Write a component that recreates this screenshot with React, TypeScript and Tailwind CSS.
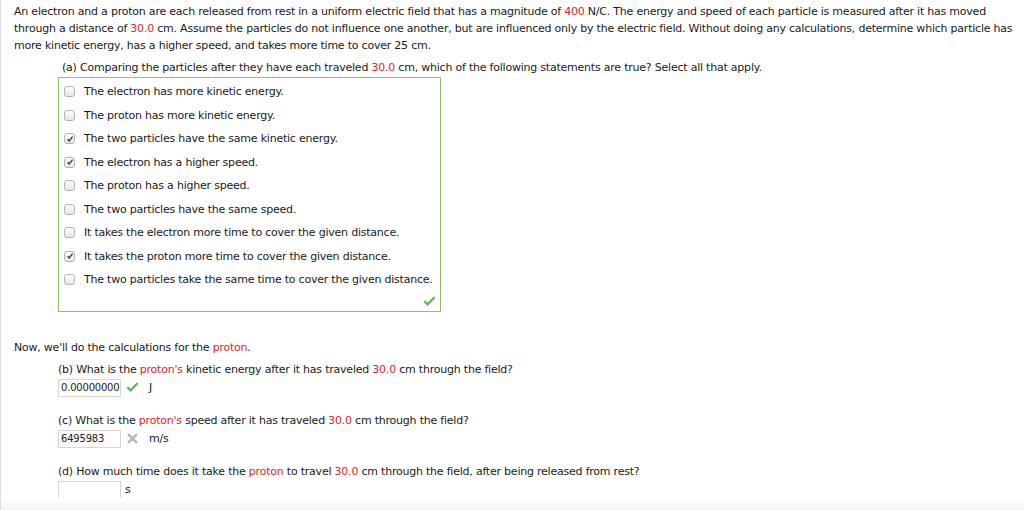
import React from 'react';

const Red = ({ children }: { children: React.ReactNode }) => (
  <span className="text-[#e8212a]">{children}</span>
);

const Box = ({ checked }: { checked: boolean }) => (
  <span className="mr-[9px] flex h-[11px] w-[11px] shrink-0 items-center justify-center rounded-[3px] border border-[#b4b4b4] bg-gradient-to-b from-[#fdfdfd] to-[#e6e6e6]">
    {checked && (
      <svg width="8" height="8" viewBox="0 0 8 8">
        <path d="M1.5 4.2 L3.2 6 L6.6 1.6" fill="none" stroke="#3a3a3a" strokeWidth="1.4" />
      </svg>
    )}
  </span>
);

const Check = ({ className = '' }: { className?: string }) => (
  <svg className={className} width="13" height="11" viewBox="0 0 14 11">
    <path d="M1 6 L5 10 L13 1.5 L11.6 0.5 L5 7.3 L2.4 4.6 Z" fill="#5cb85c" stroke="#4a9d4a" strokeWidth="0.6" strokeLinejoin="round" />
  </svg>
);

const Cross = () => (
  <svg width="11" height="11" viewBox="0 0 12 12">
    <path d="M2 2 L10 10 M10 2 L2 10" stroke="#b5b5b5" strokeWidth="2.8" strokeLinecap="round" />
  </svg>
);

const options: [string, boolean][] = [
  ['The electron has more kinetic energy.', false],
  ['The proton has more kinetic energy.', false],
  ['The two particles have the same kinetic energy.', true],
  ['The electron has a higher speed.', true],
  ['The proton has a higher speed.', false],
  ['The two particles have the same speed.', false],
  ['It takes the electron more time to cover the given distance.', false],
  ['It takes the proton more time to cover the given distance.', true],
  ['The two particles take the same time to cover the given distance.', false],
];

const Input = ({ value }: { value: string }) => (
  <div className="flex h-[18px] w-[63px] items-center border border-[#d6d6d6] bg-white px-[2px] text-[10px] leading-none tracking-[-0.2px] text-[#222]">
    {value}
  </div>
);

export default function App() {
  return (
    <div
      className="relative h-[510px] w-[1024px] overflow-hidden border-l border-[#dcdcdc] bg-white text-[11px] leading-[17px] tracking-[-0.22px] text-[#1a1a1a]"
      style={{ fontFamily: '"DejaVu Sans", Verdana, sans-serif' }}
    >
      <div className="pl-[13px] pr-[20px] pt-[3px]">
        <p className="w-[1011px]">
          An electron and a proton are each released from rest in a uniform electric field that has a magnitude of <Red>400</Red> N/C. The energy and speed of each particle is measured after it has moved through a distance of <Red>30.0</Red> cm. Assume the particles do not influence one another, but are influenced only by the electric field. Without doing any calculations, determine which particle has more kinetic energy, has a higher speed, and takes more time to cover 25 cm.
        </p>
        <div className="pl-[44px] pt-[5px]">
          <p className="pl-[4px]">
            (a) Comparing the particles after they have each traveled <Red>30.0</Red> cm, which of the following statements are true? Select all that apply.
          </p>
          <div className="mt-[1px] w-[383px] border border-[#8cc56a] pl-[5px] pt-[2px]">
            {options.map(([t, c]) => (
              <div key={t} className="flex h-[23.5px] items-center">
                <Box checked={c} />
                <span className="whitespace-nowrap">{t}</span>
              </div>
            ))}
            <div className="flex justify-end pb-[4px] pr-[4px] pt-[4px]">
              <Check />
            </div>
          </div>
        </div>
        <p className="mt-[27px]">
          Now, we'll do the calculations for the <Red>proton</Red>.
        </p>
        <div className="pl-[44px] pt-[5px]">
          <p>
            (b) What is the <Red>proton's</Red> kinetic energy after it has traveled <Red>30.0</Red> cm through the field?
          </p>
          <div className="mt-[1px] flex items-center">
            <Input value="0.00000000" />
            <Check className="ml-[5px]" />
            <span className="ml-[10px]">J</span>
          </div>
          <p className="mt-[15px]">
            (c) What is the <Red>proton's</Red> speed after it has traveled <Red>30.0</Red> cm through the field?
          </p>
          <div className="mt-[1px] flex items-center">
            <Input value="6495983" />
            <span className="ml-[6px]"><Cross /></span>
            <span className="ml-[11px]">m/s</span>
          </div>
          <p className="mt-[15px]">
            (d) How much time does it take the <Red>proton</Red> to travel <Red>30.0</Red> cm through the field, after being released from rest?
          </p>
          <div className="mt-[1px] flex items-center">
            <Input value="" />
            <span className="ml-[4px]">s</span>
          </div>
        </div>
      </div>
      <div className="absolute bottom-0 left-0 h-[12px] w-full bg-gradient-to-b from-white to-[#f2f2f2]" />
    </div>
  );
}
